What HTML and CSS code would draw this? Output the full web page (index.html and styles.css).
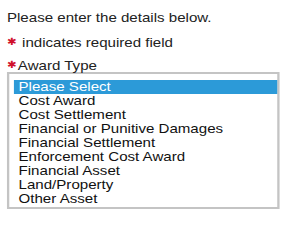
FILE: index.html
```html
<!DOCTYPE html>
<html lang="en">

<head>
    <meta charset="UTF-8">
    <meta name="viewport" content="width=device-width, initial-scale=1.0">
    <title>Award Type</title>
    <link rel="stylesheet" href="styles.css">
</head>

<body>
    <div class="page">
        <p class="intro">Please enter the details below.</p>
        <p class="note"><span class="req">&#10033;</span> indicates required field</p>

        <label class="field-label" for="award-type"><span class="req">&#10033;</span>Award Type</label>
        <ul class="listbox" id="award-type">
            <li class="selected">Please Select</li>
            <li>Cost Award</li>
            <li>Cost Settlement</li>
            <li>Financial or Punitive Damages</li>
            <li>Financial Settlement</li>
            <li>Enforcement Cost Award</li>
            <li>Financial Asset</li>
            <li>Land/Property</li>
            <li>Other Asset</li>
        </ul>
    </div>
</body>

</html>
```

FILE: styles.css
```css
* {
    margin: 0;
    padding: 0;
    list-style: none;
    box-sizing: border-box;
}

body {
    background: #fff;
    color: #222;
    font-family: "Liberation Sans", Arial, sans-serif;
    font-size: 13px;
    line-height: 15px;
}

/* the shot is stretched sideways, so widen the whole form */
.page {
    width: 258px;
    padding: 10px 0 0 6px;
    transform: scaleX(1.16);
    transform-origin: 0 0;
}

.intro {
    margin-bottom: 9.5px;
}

.note {
    margin-bottom: 8.5px;
}

.field-label {
    display: block;
}

.req {
    color: #d0102a;
    font-family: "DejaVu Sans", sans-serif;
    font-size: 10px;
    font-weight: bold;
    line-height: 0;
    vertical-align: 2px;
    margin-right: 1px;
}

.listbox {
    width: 235px;
    margin-top: -1px;
    padding: 5.5px 0 1px 4px;
    border: 2px solid #c4c4c4;
    color: #111;
}

.listbox li {
    height: 14px;
    line-height: 14px;
    padding-left: 4px;
    white-space: nowrap;
}

.listbox .selected {
    background: #2c9ad8;
    color: #fff;
}
```
